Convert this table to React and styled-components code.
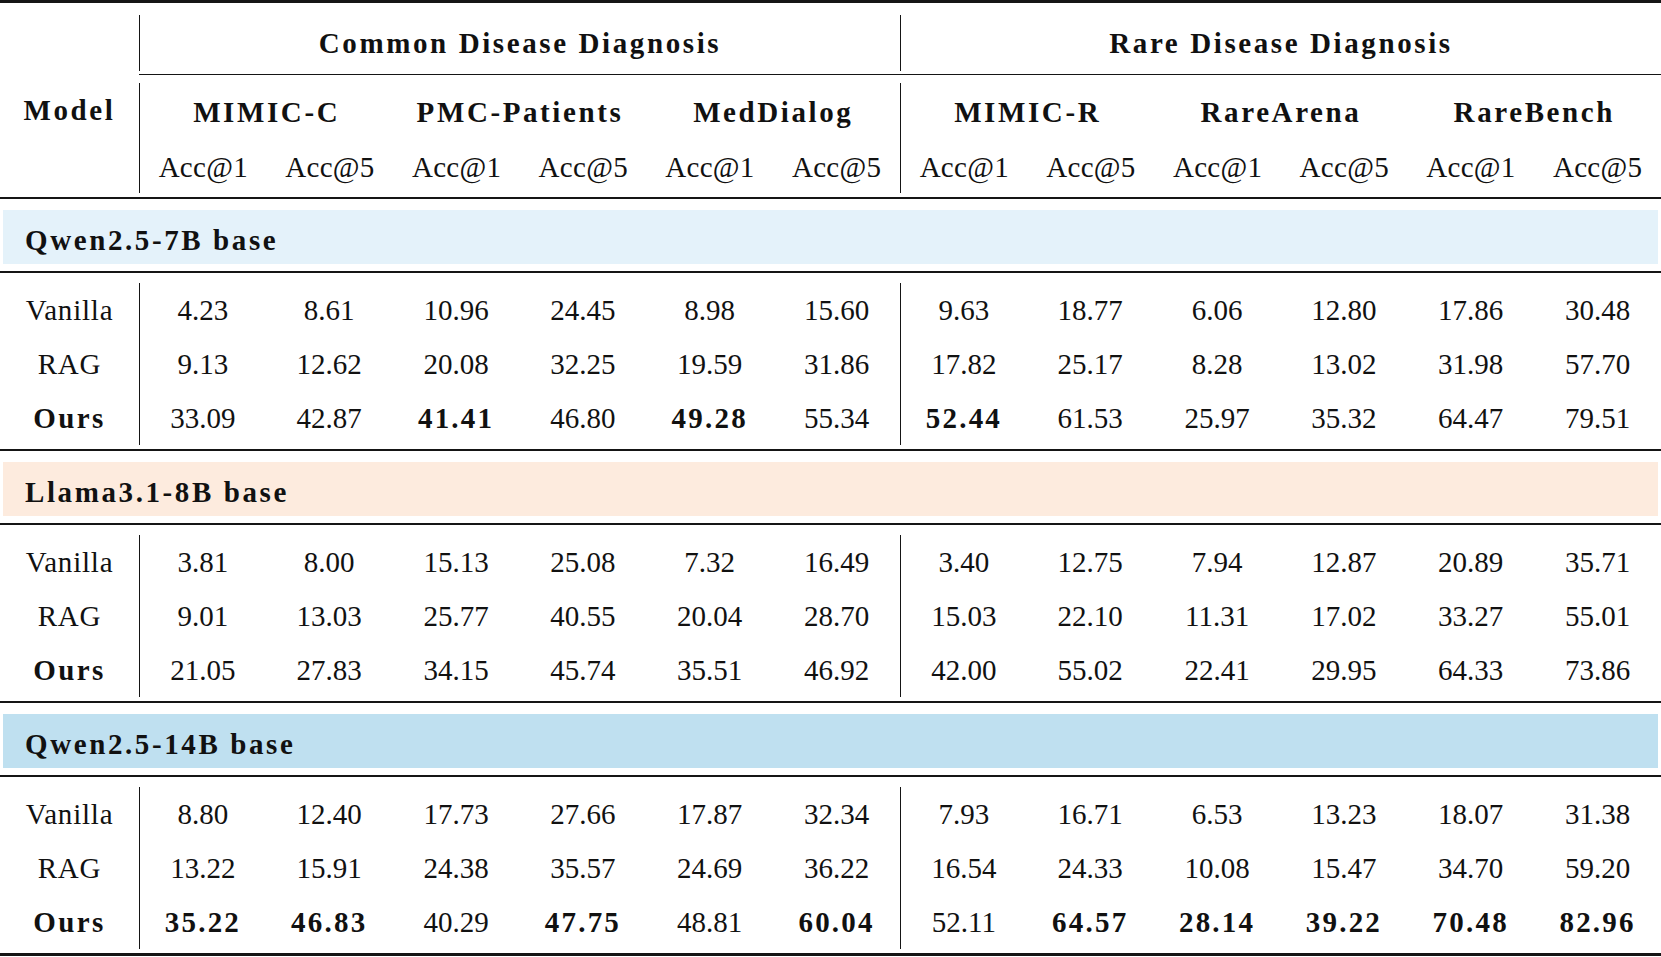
import React from "react";
import styled, { createGlobalStyle } from "styled-components";

const GlobalStyle = createGlobalStyle`
  html, body { margin: 0; padding: 0; background: #ffffff; }
  body {
    font-family: "Liberation Serif", "Times New Roman", serif;
    color: #111111;
  }
`;

const Page = styled.div`
  width: 1661px;
  height: 957px;
  overflow: hidden;
  background: #ffffff;
  font-size: 29px;
  line-height: 1;
`;

const Rule = styled.div`
  height: ${(p) => p.$w}px;
  background: #151515;
`;

const Header = styled.div`
  display: flex;
`;

const ModelHead = styled.div`
  width: 139px;
  flex: none;
  padding-top: 93px;
  text-align: center;
  font-weight: 700;
  letter-spacing: 2.6px;
`;

const Group = styled.div`
  flex: 1;
  display: flex;
  flex-direction: column;
`;

const GroupTitle = styled.div`
  margin-top: 12px;
  height: 56px;
  border-left: 1.5px solid #151515;
  display: flex;
  align-items: center;
  justify-content: center;
  font-weight: 700;
  letter-spacing: 2.6px;
`;

const CmidRule = styled.div`
  margin-top: 3px;
  height: 1px;
  background: #151515;
`;

const SubBlock = styled.div`
  margin-top: 8px;
  margin-bottom: 4px;
  height: 110px;
  border-left: 1.5px solid #151515;
  display: grid;
  grid-template-columns: repeat(6, 1fr);
  grid-template-rows: 58px 52px;
`;

const DatasetName = styled.div`
  grid-column: span 2;
  display: flex;
  align-items: center;
  justify-content: center;
  font-weight: 700;
  letter-spacing: 2.6px;
`;

const Metric = styled.div`
  display: flex;
  align-items: center;
  justify-content: center;
  letter-spacing: 0.3px;
`;

const Band = styled.div`
  margin: 11px 3px 7px;
  height: 54px;
  box-sizing: border-box;
  padding: 7px 0 0 22px;
  background: ${(p) => p.$bg};
  display: flex;
  align-items: center;
  font-weight: 700;
  letter-spacing: 2.6px;
`;

const Rows = styled.div`
  padding: 10px 0 4px;
  display: grid;
  grid-template-columns: 139px repeat(12, 1fr);
  grid-auto-rows: 54px;
`;

const Cell = styled.div`
  display: flex;
  align-items: center;
  justify-content: center;
  font-weight: ${(p) => (p.$bold ? 700 : 400)};
  letter-spacing: ${(p) => (p.$bold ? "2.2px" : "0")};
  border-left: ${(p) => (p.$divider ? "1.5px solid #151515" : "none")};
`;

const Label = styled(Cell)`
  letter-spacing: ${(p) => (p.$bold ? "2.4px" : "0.8px")};
`;

const groups = [
  { title: "Common Disease Diagnosis", sets: ["MIMIC-C", "PMC-Patients", "MedDialog"] },
  { title: "Rare Disease Diagnosis", sets: ["MIMIC-R", "RareArena", "RareBench"] },
];

const sections = [
  {
    name: "Qwen2.5-7B base",
    bg: "#e4f2fa",
    rows: [
      ["Vanilla", "4.23 8.61 10.96 24.45 8.98 15.60 9.63 18.77 6.06 12.80 17.86 30.48"],
      ["RAG", "9.13 12.62 20.08 32.25 19.59 31.86 17.82 25.17 8.28 13.02 31.98 57.70"],
      ["Ours", "33.09 42.87 *41.41 46.80 *49.28 55.34 *52.44 61.53 25.97 35.32 64.47 79.51"],
    ],
  },
  {
    name: "Llama3.1-8B base",
    bg: "#fdebde",
    rows: [
      ["Vanilla", "3.81 8.00 15.13 25.08 7.32 16.49 3.40 12.75 7.94 12.87 20.89 35.71"],
      ["RAG", "9.01 13.03 25.77 40.55 20.04 28.70 15.03 22.10 11.31 17.02 33.27 55.01"],
      ["Ours", "21.05 27.83 34.15 45.74 35.51 46.92 42.00 55.02 22.41 29.95 64.33 73.86"],
    ],
  },
  {
    name: "Qwen2.5-14B base",
    bg: "#bfe0f0",
    rows: [
      ["Vanilla", "8.80 12.40 17.73 27.66 17.87 32.34 7.93 16.71 6.53 13.23 18.07 31.38"],
      ["RAG", "13.22 15.91 24.38 35.57 24.69 36.22 16.54 24.33 10.08 15.47 34.70 59.20"],
      ["Ours", "*35.22 *46.83 40.29 *47.75 48.81 *60.04 52.11 *64.57 *28.14 *39.22 *70.48 *82.96"],
    ],
  },
];

export default function App() {
  return (
    <Page>
      <GlobalStyle />
      <Rule $w={3} />
      <Header>
        <ModelHead>Model</ModelHead>
        {groups.map((g) => (
          <Group key={g.title}>
            <GroupTitle>{g.title}</GroupTitle>
            <CmidRule />
            <SubBlock>
              {g.sets.map((s) => (
                <DatasetName key={s}>{s}</DatasetName>
              ))}
              {g.sets.flatMap((s) => [
                <Metric key={s + "1"}>Acc@1</Metric>,
                <Metric key={s + "5"}>Acc@5</Metric>,
              ])}
            </SubBlock>
          </Group>
        ))}
      </Header>
      <Rule $w={2} />
      {sections.map((sec, si) => (
        <React.Fragment key={sec.name}>
          <Band $bg={sec.bg}>{sec.name}</Band>
          <Rule $w={2} />
          <Rows>
            {sec.rows.map(([label, vals]) => (
              <React.Fragment key={label}>
                <Label $bold={label === "Ours"}>{label}</Label>
                {vals.split(" ").map((v, i) => {
                  const bold = v.startsWith("*");
                  return (
                    <Cell key={i} $bold={bold} $divider={i === 0 || i === 6}>
                      {bold ? v.slice(1) : v}
                    </Cell>
                  );
                })}
              </React.Fragment>
            ))}
          </Rows>
          <Rule $w={si === sections.length - 1 ? 3 : 2} />
        </React.Fragment>
      ))}
    </Page>
  );
}
